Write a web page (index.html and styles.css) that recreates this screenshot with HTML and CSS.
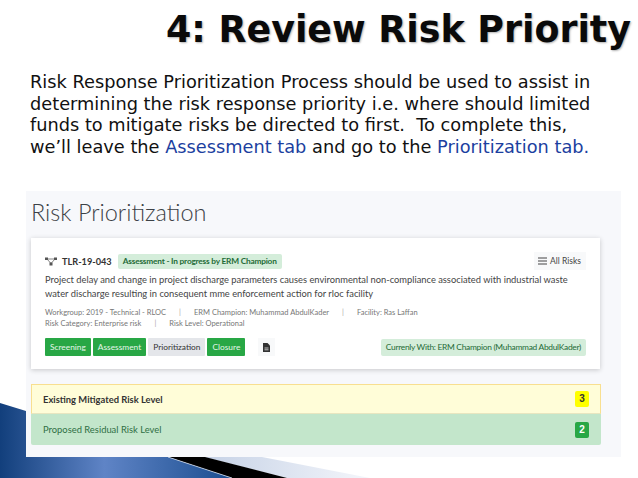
FILE: index.html
```html
<!DOCTYPE html>
<html lang="en">
<head>
<meta charset="utf-8">
<title>4: Review Risk Priority</title>
<link rel="stylesheet" href="styles.css">
</head>
<body>
<div class="slide">
  <svg class="deco" viewBox="0 0 638 478" width="638" height="478" aria-hidden="true">
    <defs>
      <linearGradient id="blue" x1="0" y1="0" x2="1" y2="0">
        <stop offset="0" stop-color="#123f7c"/>
        <stop offset="0.45" stop-color="#5f84c6"/>
        <stop offset="1" stop-color="#1a4d8f"/>
      </linearGradient>
      <linearGradient id="pale" x1="0" y1="0" x2="1" y2="0">
        <stop offset="0" stop-color="#c6d2e6"/>
        <stop offset="1" stop-color="#f4f6fb"/>
      </linearGradient>
    </defs>
    <polygon points="204,457 262,457 370,478 287,478" fill="url(#pale)"/>
    <polygon points="168,457 205,457 287,478 232,478" fill="#000"/>
    <polygon points="0,403 26,411 26,457 168,457 232,478 0,478" fill="url(#blue)"/>
    <path d="M168,457 L232,478" stroke="#dfe6f2" stroke-width=".7"/>
  </svg>
  <h1 class="title">4: Review Risk Priority</h1>
  <p class="intro">Risk Response Prioritization Process should be used to assist in determining the risk response priority i.e. where should limited funds to mitigate risks be directed to first.&nbsp; To complete this, we’ll leave the <span class="link">Assessment tab</span> and go to the <span class="link">Prioritization tab.</span></p>
  <section class="panel">
    <h2 class="panel-title">Risk Prioritization</h2>
    <div class="card">
      <div class="card-head">
        <svg class="tree" viewBox="0 0 12 9" width="12" height="9" aria-hidden="true">
          <path d="M2 2 L6 6.5 L10 2 M2 2 H10" fill="none" stroke="#666" stroke-width=".8"/>
          <rect x="0" y="0.5" width="3" height="2.5" fill="#555"/>
          <rect x="9" y="0.5" width="3" height="2.5" fill="#555"/>
          <rect x="4.5" y="5.5" width="3" height="3" fill="#555"/>
        </svg>
        <strong class="ref">TLR-19-043</strong>
        <span class="status">Assessment - In progress by ERM Champion</span>
        <span class="all-risks">
          <svg viewBox="0 0 9 8" width="9" height="8" aria-hidden="true"><path d="M0 1H9M0 4H9M0 7H9" stroke="#444" stroke-width="1.2"/></svg>
          All Risks
        </span>
      </div>
      <p class="desc">Project delay and change in project discharge parameters causes environmental non-compliance associated with industrial waste water discharge resulting in consequent mme enforcement action for rloc facility</p>
      <div class="meta">
        <div class="meta-row"><span>Workgroup: 2019 - Technical - RLOC</span><i>|</i><span>ERM Champion: Muhammad AbdulKader</span><i>|</i><span>Facility: Ras Laffan</span></div>
        <div class="meta-row"><span>Risk Category: Enterprise risk</span><i>|</i><span>Risk Level: Operational</span></div>
      </div>
      <div class="actions">
        <span class="btn btn-green">Screening</span>
        <span class="btn btn-green">Assessment</span>
        <span class="btn btn-grey">Prioritization</span>
        <span class="btn btn-green">Closure</span>
        <span class="btn-doc">
          <svg viewBox="0 0 7 9" width="7" height="9" aria-hidden="true"><path d="M0 0H4.5L7 2.5V9H0Z" fill="#333"/><path d="M1.5 5H5.5M1.5 6.8H5.5" stroke="#fff" stroke-width=".7"/></svg>
        </span>
        <span class="current">Currenly With: ERM Champion (Muhammad AbdulKader)</span>
      </div>
    </div>
    <div class="levels">
      <div class="level level-yellow"><span>Existing Mitigated Risk Level</span><b class="badge badge-yellow">3</b></div>
      <div class="level level-green"><span>Proposed Residual Risk Level</span><b class="badge badge-green">2</b></div>
    </div>
  </section>
</div>
</body>
</html>
```
FILE: styles.css
```css
* { box-sizing: border-box; }
html, body { margin: 0; padding: 0; background: #fff; }
.slide { position: relative; width: 638px; height: 478px; overflow: hidden; background: #fff; font-family: "Lato", sans-serif; }
.deco { position: absolute; left: 0; top: 0; }
.title {
  position: relative; margin: 0; padding: 11px 7px 0 0; height: 48px; text-align: right;
  font: bold 36.4px/38px "DejaVu Sans", sans-serif; color: #0a0a0a; white-space: nowrap;
  text-shadow: 1px 1px 2px rgba(0,0,0,.3);
}
.intro {
  position: relative; margin: 24px 0 0 30px; width: 575px; height: 119px;
  font: 17.75px/21.6px "DejaVu Sans", sans-serif; color: #111;
}
.link { color: #1c3fa0; }
.panel {
  position: relative; margin-left: 26px; width: 595px; height: 266px; padding: 0 20px 0 5px; background: #f7f8fb;
}
.panel-title { margin: 0; padding-top: 5px; height: 47px; font: 300 23.5px/32px "Lato", sans-serif; color: #3c4146; }
.card {
  height: 131px; width: 569px; background: #fff; padding: 15px 14px 0 14px;
  box-shadow: 0 1px 5px rgba(0,0,0,.2);
}
.card-head { display: flex; align-items: center; height: 16px; }
.tree { margin-right: 5px; }
.ref { font-size: 9.2px; font-weight: 700; color: #333; margin-right: 6px; }
.status { background: #d4edda; color: #1f6b37; font-size: 8.3px; font-weight: 700; letter-spacing: -.2px; padding: 3px 5px; border-radius: 2px; line-height: 9px; }
.all-risks { margin-left: auto; display: flex; align-items: center; gap: 3px; background: #f8f9fa; color: #444; font-size: 8.5px; padding: 4px 5px 4px 4px; }
.desc { margin: 4px 0 0; font-size: 9.33px; line-height: 14px; color: #444; width: 545px; }
.meta { margin-top: 6px; font-size: 7.5px; line-height: 11px; color: #777; }
.meta-row { display: flex; }
.meta-row i { font-style: normal; margin: 0 13px; color: #aaa; }
.actions { display: flex; align-items: center; gap: 2px; margin-top: 9px; font-size: 8.35px; }
.btn { height: 18px; padding: 0 5px; display: flex; align-items: center; border-radius: 1px; }
.btn-green { background: #28a745; color: #e6f6ea; }
.btn-grey { background: #e4e6ea; color: #333; }
.btn-doc { margin-left: 11px; display: flex; align-items: center; justify-content: center; width: 17px; height: 18px; background: #f8f9fa; }
.current { margin-left: auto; background: #d4edda; color: #1f6b37; height: 17px; line-height: 17px; padding: 0 5px; border-radius: 2px; font-size: 8.4px; letter-spacing: -.28px; }
.levels { margin-top: 15px; width: 570px; }
.level { height: 30px; display: flex; align-items: center; justify-content: space-between; padding: 0 12px; font-size: 9.4px; }
.level-yellow { background: #fffdd8; border: 1px solid #f8df90; border-bottom-color: #e8e6c0; color: #333; font-weight: 700; padding: 0 11px; }
.level-green { background: #c3e6cb; color: #2f6f44; height: 31px; border-radius: 0 0 2px 2px; }
.badge { width: 14px; height: 16px; display: flex; align-items: center; justify-content: center; border-radius: 2px; font: bold 10px/1 "Liberation Sans", sans-serif; }
.badge-yellow { background: #ffff00; color: #333; }
.badge-green { background: #28a745; color: #fff; }
```
